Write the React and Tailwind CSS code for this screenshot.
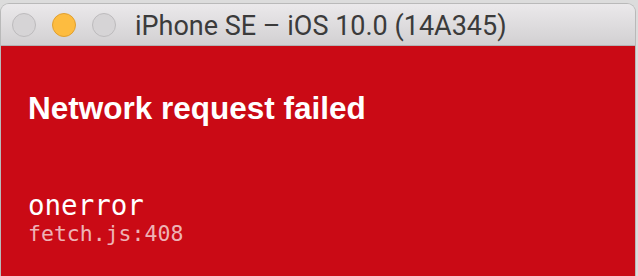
import React from 'react';

const Light = ({ color, border }) => (
  <span className={`block w-[24px] h-[24px] rounded-full border ${color} ${border}`} />
);

export default function App() {
  return (
    <div className="w-[638px] h-[276px] bg-[#dcdcdc] overflow-hidden pt-[3px] pr-[2px]">
      <div className="h-full flex flex-col rounded-t-[9px] overflow-hidden border-x border-t border-[#b9b9b9]">
        {/* title bar */}
        <div className="h-[42px] shrink-0 flex items-center bg-gradient-to-b from-[#ebe9eb] to-[#d2d0d2] border-b border-[#b4b2b4]">
          <div className="flex items-center gap-[16px] pl-[11px] pt-[1px]">
            <Light color="bg-[#d6d4d6]" border="border-[#bdbbbd]" />
            <Light color="bg-[#fdbc40]" border="border-[#e0a030]" />
            <Light color="bg-[#d6d4d6]" border="border-[#bdbbbd]" />
          </div>
          <span
            className="ml-[19px] pt-[3px] text-[27px] text-[#3b3b3b] leading-none"
            style={{ fontFamily: 'Roboto, "Liberation Sans", sans-serif' }}
          >
            iPhone SE – iOS 10.0 (14A345)
          </span>
        </div>
        {/* red box */}
        <div className="flex-1 bg-[#ca0a15] text-white px-[27px] pt-[45px]">
          <h1
            className="text-[31.5px] font-bold leading-[34px]"
            style={{ fontFamily: '"Liberation Sans", Arial, sans-serif' }}
          >
            Network request failed
          </h1>
          <div
            className="mt-[65px] text-[27.5px] leading-[30px]"
            style={{ fontFamily: '"DejaVu Sans Mono", monospace' }}
          >
            onerror
          </div>
          <div
            className="text-[21.5px] leading-[28px] text-white/70"
            style={{ fontFamily: '"DejaVu Sans Mono", monospace' }}
          >
            fetch.js:408
          </div>
        </div>
      </div>
    </div>
  );
}
